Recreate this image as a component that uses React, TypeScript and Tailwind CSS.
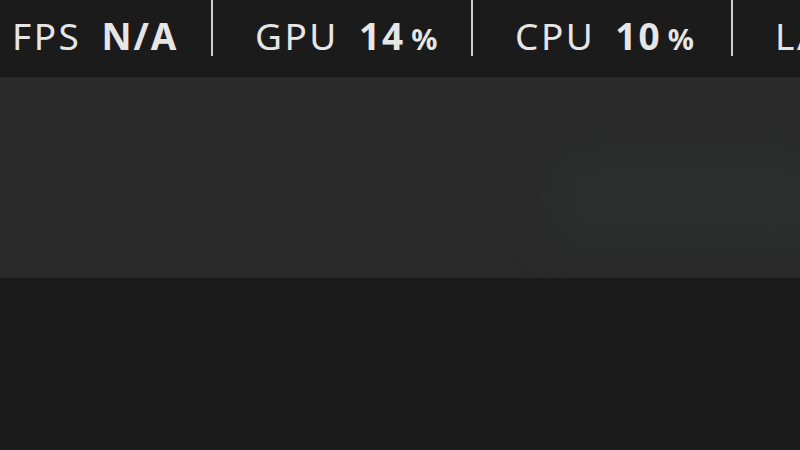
import React from 'react';

const stats = [
  { label: 'FPS', value: 'N/A', unit: '' },
  { label: 'GPU', value: '14', unit: '%' },
  { label: 'CPU', value: '10', unit: '%' },
  { label: 'LAT', value: '', unit: '' },
];

export default function App() {
  return (
    <div className="w-[800px] h-[450px] bg-[#1b1b1b] overflow-hidden" style={{ fontFamily: '"Noto Sans", "Open Sans", sans-serif' }}>
      {/* stats bar */}
      <div className="h-[77px] flex items-start text-[#e6e6e6] whitespace-nowrap overflow-hidden">
        {stats.map((s, i) => (
          <div key={s.label} className="flex items-start shrink-0">
            {i > 0 && <div className="w-[2px] h-[56px] bg-[#cfcfcf]" />}
            <div className={`flex items-baseline pt-[13px] ${i === 0 ? 'w-[211px] pl-[12px]' : 'w-[258px] pl-[42px]'}`}>
              <span className="text-[37px] leading-[46px] tracking-[2.5px]">{s.label}</span>
              {s.value && <span className="text-[37px] leading-[46px] tracking-[2px] font-bold ml-[20px]">{s.value}</span>}
              {s.unit && <span className="text-[29px] font-bold ml-[6px]">{s.unit}</span>}
            </div>
          </div>
        ))}
      </div>

      {/* preview panel */}
      <div className="h-[201px] bg-[#2a2a2a] flex items-center justify-end overflow-hidden">
        <div className="w-[280px] h-[90px] mt-[40px] mr-[-30px] rounded-[30px] bg-[#2d302f] blur-xl opacity-80" />
      </div>
    </div>
  );
}
